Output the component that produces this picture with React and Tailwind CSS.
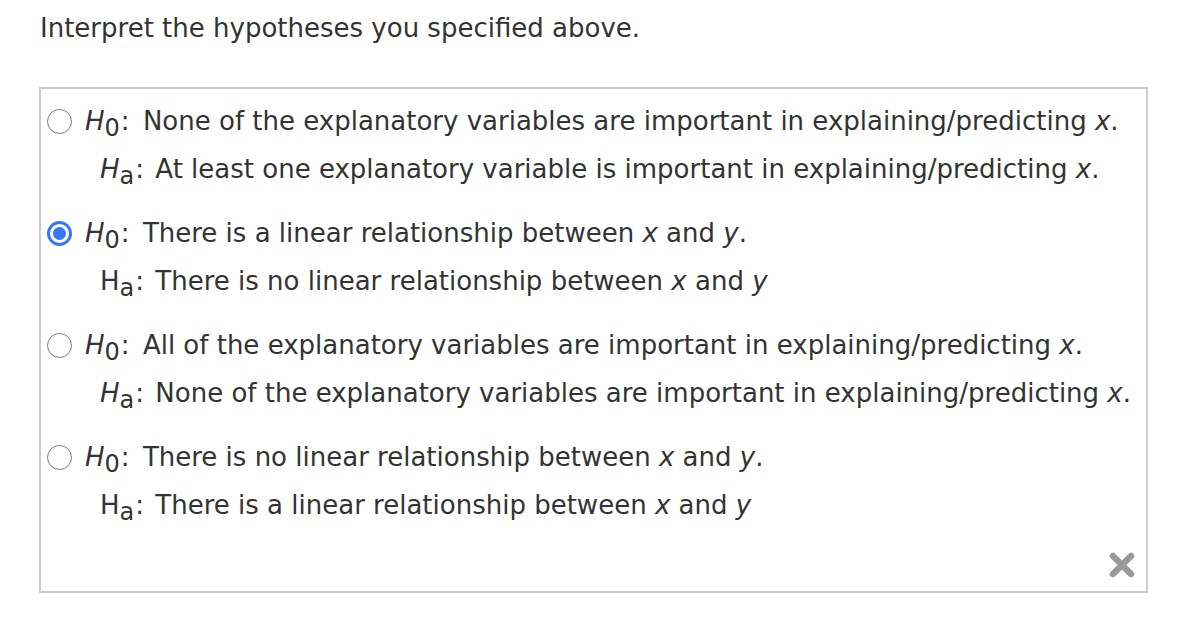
import React, { useState } from "react";

const options = [
  {
    h0: ["None of the explanatory variables are important in explaining/predicting ", "x", "."],
    ha: ["At least one explanatory variable is important in explaining/predicting ", "x", "."],
    haItalic: true,
  },
  {
    h0: ["There is a linear relationship between ", "x", " and ", "y", "."],
    ha: ["There is no linear relationship between ", "x", " and ", "y"],
    haItalic: false,
  },
  {
    h0: ["All of the explanatory variables are important in explaining/predicting ", "x", "."],
    ha: ["None of the explanatory variables are important in explaining/predicting ", "x", "."],
    haItalic: true,
  },
  {
    h0: ["There is no linear relationship between ", "x", " and ", "y", "."],
    ha: ["There is a linear relationship between ", "x", " and ", "y"],
    haItalic: false,
  },
];

function Parts({ parts }) {
  return parts.map((p, i) =>
    i % 2 === 1 ? (
      <i key={i} className="italic">
        {p}
      </i>
    ) : (
      <span key={i}>{p}</span>
    )
  );
}

function Radio({ checked }) {
  if (checked) {
    return (
      <span className="flex h-[25px] w-[25px] items-center justify-center rounded-full border-[3px] border-[#3478f6] bg-white">
        <span className="h-[13px] w-[13px] rounded-full bg-[#3478f6]" />
      </span>
    );
  }
  return <span className="block h-[25px] w-[25px] rounded-full border-[1.5px] border-[#7a7a7a] bg-white" />;
}

export default function App() {
  const [selected, setSelected] = useState(1);

  return (
    <div className="h-[620px] w-[1180px] bg-white text-[26px] text-[#333] font-['DejaVu_Sans',Verdana,sans-serif]">
      <div className="px-[40px] pt-[8px] leading-[40px]">Interpret the hypotheses you specified above.</div>
      <div className="ml-[39px] mt-[39px] flex h-[506px] w-[1109px] flex-col border-2 border-[#cccccc] pt-[8px]">
        <div className="flex flex-col gap-[16px]">
          {options.map((o, idx) => (
            <div key={idx} className="flex flex-col leading-[48px]">
              <div className="flex items-center cursor-pointer" onClick={() => setSelected(idx)}>
                <span className="ml-[6px] mr-[13px]">
                  <Radio checked={selected === idx} />
                </span>
                <span className="whitespace-nowrap">
                  <i className="italic">H</i>
                  <sub className="text-[24px] bottom-[-6px] mr-[1px]">0</sub>
                  <span className="mr-[5px]">:</span> <Parts parts={o.h0} />
                </span>
              </div>
              <div className="pl-[59px] whitespace-nowrap">
                {o.haItalic ? <i className="italic">H</i> : <span>H</span>}
                <sub className="text-[24px] bottom-[-6px] mr-[1px]">a</sub>
                <span className="mr-[3px]">:</span> <Parts parts={o.ha} />
              </div>
            </div>
          ))}
        </div>
        <div className="mt-auto flex justify-end pb-[12px] pr-[10px]">
          <svg width="28" height="28" viewBox="0 0 28 28">
            <path d="M5 5 L23 23 M23 5 L5 23" stroke="#9a9a9a" strokeWidth="6.5" strokeLinecap="round" />
          </svg>
        </div>
      </div>
    </div>
  );
}
